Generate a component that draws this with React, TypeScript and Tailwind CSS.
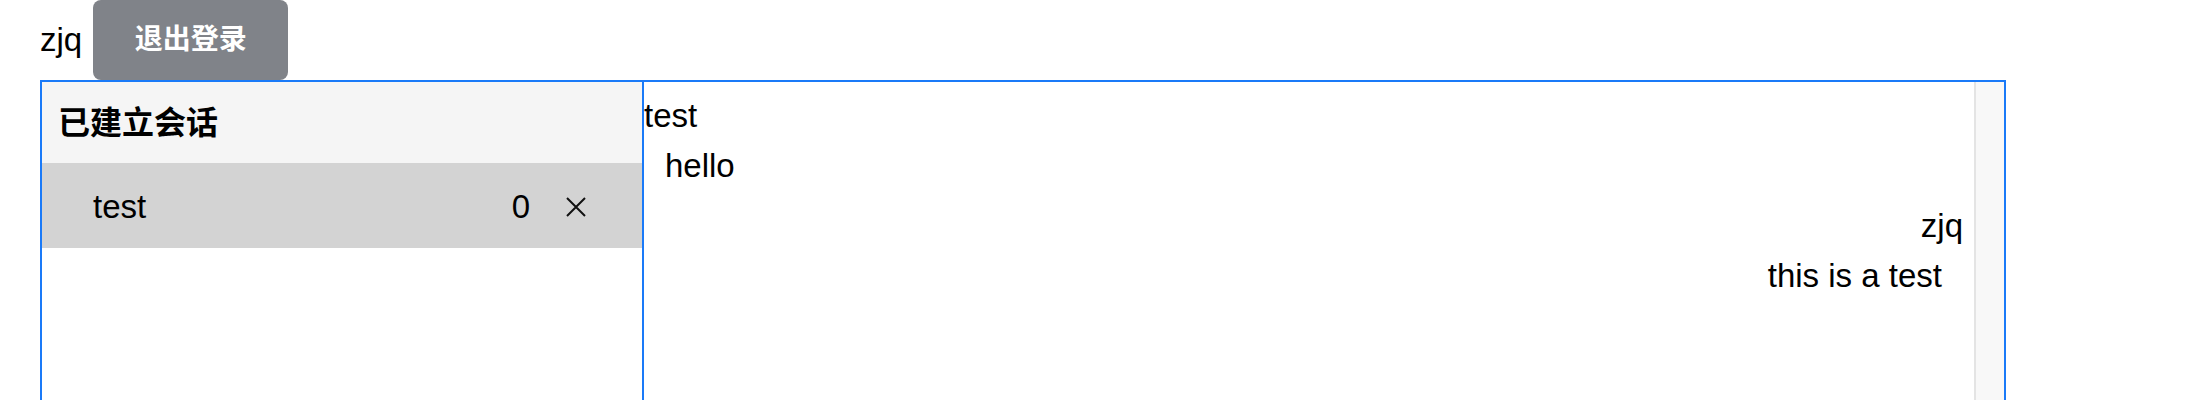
import React from "react";

interface Session {
  name: string;
  unread: number;
}

interface Message {
  from: string;
  text: string;
  self: boolean;
}

const sessions: Session[] = [{ name: "test", unread: 0 }];

const messages: Message[] = [
  { from: "test", text: "hello", self: false },
  { from: "zjq", text: "this is a test", self: true },
];

const font = "font-['Liberation_Sans','Noto_Sans_CJK_SC',sans-serif]";

function CloseIcon() {
  return (
    <svg width="20" height="20" viewBox="0 0 20 20" className="block">
      <path d="M1 1L19 19M19 1L1 19" stroke="#111" strokeWidth="2" fill="none" />
    </svg>
  );
}

export default function App() {
  return (
    <div className={`h-[400px] w-[2212px] overflow-hidden bg-white text-black ${font}`}>
      {/* 顶部用户栏 */}
      <div className="flex items-center h-[80px] pl-[40px]">
        <span className="text-[33px] leading-[36px]">zjq</span>
        <button className="ml-[11px] w-[195px] h-[80px] rounded-[8px] bg-[#808389] text-white text-[28px] font-bold flex items-center justify-center">
          退出登录
        </button>
      </div>

      {/* 会话面板 */}
      <div className="ml-[40px] w-[1966px] h-[500px] border-2 border-[#1a7af8] flex">
        <div className="w-[602px] border-r-2 border-[#1a7af8] flex flex-col">
          <div className="h-[81px] bg-[#f5f5f5] flex items-center pl-[16px] text-[32px] font-bold">
            已建立会话
          </div>
          {sessions.map((s) => (
            <div key={s.name} className="h-[85px] bg-[#d3d3d3] flex items-center pl-[51px] pr-[56px] pt-[3px] text-[33px]">
              <span className="flex-1">{s.name}</span>
              <span>{s.unread}</span>
              <span className="ml-[36px]">
                <CloseIcon />
              </span>
            </div>
          ))}
        </div>

        <div className="flex-1 flex">
          <div className="flex-1 pt-[9px] text-[33px] leading-[50px]">
            {messages.map((m, i) =>
              m.self ? (
                <div key={i} className="mt-[10px] text-right">
                  <div className="pr-[11px]">{m.from}</div>
                  <div className="pr-[32px]">{m.text}</div>
                </div>
              ) : (
                <div key={i}>
                  <div>{m.from}</div>
                  <div className="pl-[21px]">{m.text}</div>
                </div>
              )
            )}
          </div>
          {/* 滚动条轨道 */}
          <div className="w-[30px] bg-[#f8f8f8] border-l-2 border-[#e4e4e4]"></div>
        </div>
      </div>
    </div>
  );
}
